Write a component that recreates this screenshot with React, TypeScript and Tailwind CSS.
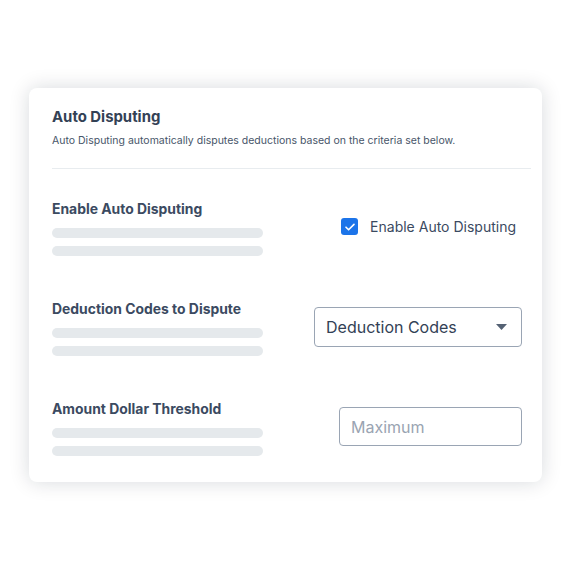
import React from "react";

function Bars() {
  return (
    <div className="mt-[10px] flex flex-col gap-[8px]">
      <div className="h-[10px] w-[211px] rounded-full bg-[#e5e9ec]" />
      <div className="h-[10px] w-[211px] rounded-full bg-[#e5e9ec]" />
    </div>
  );
}

function Row({ label, children }: { label: string; children: React.ReactNode }) {
  return (
    <div className="flex h-[56px] items-center justify-between pr-[9px]">
      <div className="flex flex-col">
        <div className="text-[13.9px] font-bold leading-[18px] text-[#3b4a61]">{label}</div>
        <Bars />
      </div>
      <div className="-mt-[3px]">{children}</div>
    </div>
  );
}

export default function App() {
  return (
    <div
      className="min-h-screen bg-white pl-[29px] pt-[88px]"
      style={{ fontFamily: "Inter, 'Noto Sans', sans-serif" }}
    >
      <div className="h-[394px] w-[513px] rounded-lg bg-white pl-[23px] pr-[11px] pt-[19px] shadow-[0_0_20px_rgba(15,23,42,0.16)]">
        <h2 className="text-[14.9px] font-bold leading-[20px] text-[#334155]">Auto Disputing</h2>
        <p className="mt-[7px] text-[10.5px] leading-[14px] text-[#475569]">
          Auto Disputing automatically disputes deductions based on the criteria set below.
        </p>
        <div className="mt-[20px] h-px bg-[#e8ecef]" />

        <div className="mt-[31px] flex flex-col gap-[44px]">
          <Row label="Enable Auto Disputing">
            <label className="mr-[6px] flex items-center gap-[12px]">
              <span className="flex h-[17px] w-[17px] items-center justify-center rounded-[3px] bg-[#1c74e9]">
                <svg width="12" height="12" viewBox="0 0 12 12" fill="none">
                  <path d="M2 6.2l2.6 2.6L10 3.4" stroke="white" strokeWidth="1.6" strokeLinecap="round" strokeLinejoin="round" />
                </svg>
              </span>
              <span className="text-[14px] text-[#3b4a61]">Enable Auto Disputing</span>
            </label>
          </Row>

          <Row label="Deduction Codes to Dispute">
            <div className="flex h-[40px] w-[208px] items-center justify-between rounded-[4px] border border-[#9aa5b4] pl-[11px] pr-[14px]">
              <span className="text-[16px] text-[#334155]">Deduction Codes</span>
              <svg width="11" height="6" viewBox="0 0 11 6">
                <path d="M0 0h11L5.5 6z" fill="#556274" />
              </svg>
            </div>
          </Row>

          <Row label="Amount Dollar Threshold">
            <div className="flex h-[39px] w-[183px] items-center rounded-[4px] border border-[#9aa5b4] pl-[11px]">
              <span className="text-[16px] text-[#9aa4b2]">Maximum</span>
            </div>
          </Row>
        </div>
      </div>
    </div>
  );
}
